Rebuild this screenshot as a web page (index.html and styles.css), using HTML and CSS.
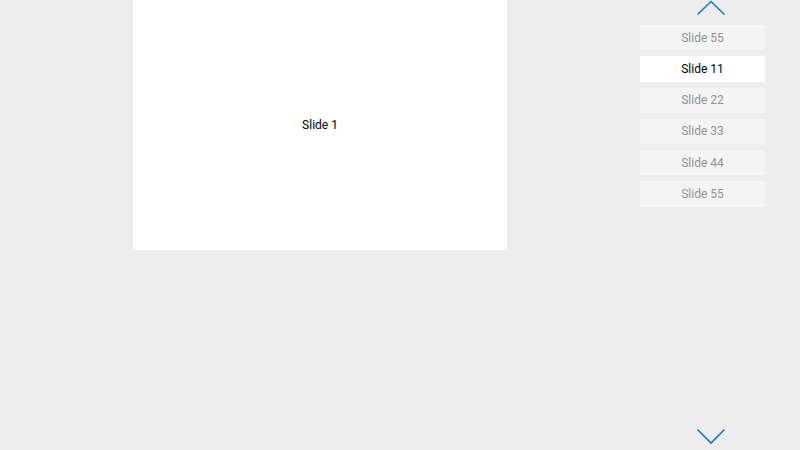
FILE: index.html
```html
<!DOCTYPE html>
<html>
<head>
<meta charset="utf-8">
<link rel="stylesheet" href="styles.css">
</head>
<body>
<div class="page">
  <main class="stage">
    <div class="slide">Slide 1</div>
  </main>
  <aside class="thumbs">
    <button class="nav nav-up" aria-label="Previous">
      <svg width="30" height="17" viewBox="0 0 30 17"><polyline points="1.5,14.5 15,1.5 28.5,14.5" fill="none" stroke="#1b75d8" stroke-width="1.6"/></svg>
    </button>
    <ul class="list">
      <li class="thumb">Slide 55</li>
      <li class="thumb active">Slide 11</li>
      <li class="thumb">Slide 22</li>
      <li class="thumb">Slide 33</li>
      <li class="thumb">Slide 44</li>
      <li class="thumb">Slide 55</li>
    </ul>
    <div class="spacer"></div>
    <button class="nav nav-down" aria-label="Next">
      <svg width="30" height="17" viewBox="0 0 30 17"><polyline points="1.5,1.5 15,15 28.5,1.5" fill="none" stroke="#1b75d8" stroke-width="1.6"/></svg>
    </button>
  </aside>
</div>
</body>
</html>
```
FILE: styles.css
```css
html, body {
  margin: 0;
  padding: 0;
  background: #ededed;
  font-family: Roboto, "Liberation Sans", Arial, sans-serif;
}
.page {
  display: flex;
  width: 800px;
  height: 450px;
}
.stage {
  width: 640px;
  display: flex;
  justify-content: center;
  align-items: flex-start;
}
.slide {
  width: 374px;
  height: 250px;
  background: #fff;
  display: flex;
  align-items: center;
  justify-content: center;
  font-size: 12px;
  color: #000;
}
.thumbs {
  width: 160px;
  display: flex;
  flex-direction: column;
}
.nav {
  background: none;
  border: 0;
  padding: 0;
  margin: 0 0 0 56px;
  width: 30px;
  display: flex;
  align-items: flex-start;
  cursor: pointer;
}
.nav svg { display: block; }
.nav-up { height: 25px; }
.nav-down { height: 22px; }
.list {
  list-style: none;
  margin: 0;
  padding: 0;
  width: 125px;
  display: flex;
  flex-direction: column;
  gap: 6px;
}
.thumb {
  height: 25.25px;
  background: #f4f4f4;
  color: #939393;
  font-size: 12px;
  display: flex;
  align-items: center;
  justify-content: center;
}
.thumb.active {
  background: #fff;
  color: #000;
}
.spacer { flex: 1; }
```
